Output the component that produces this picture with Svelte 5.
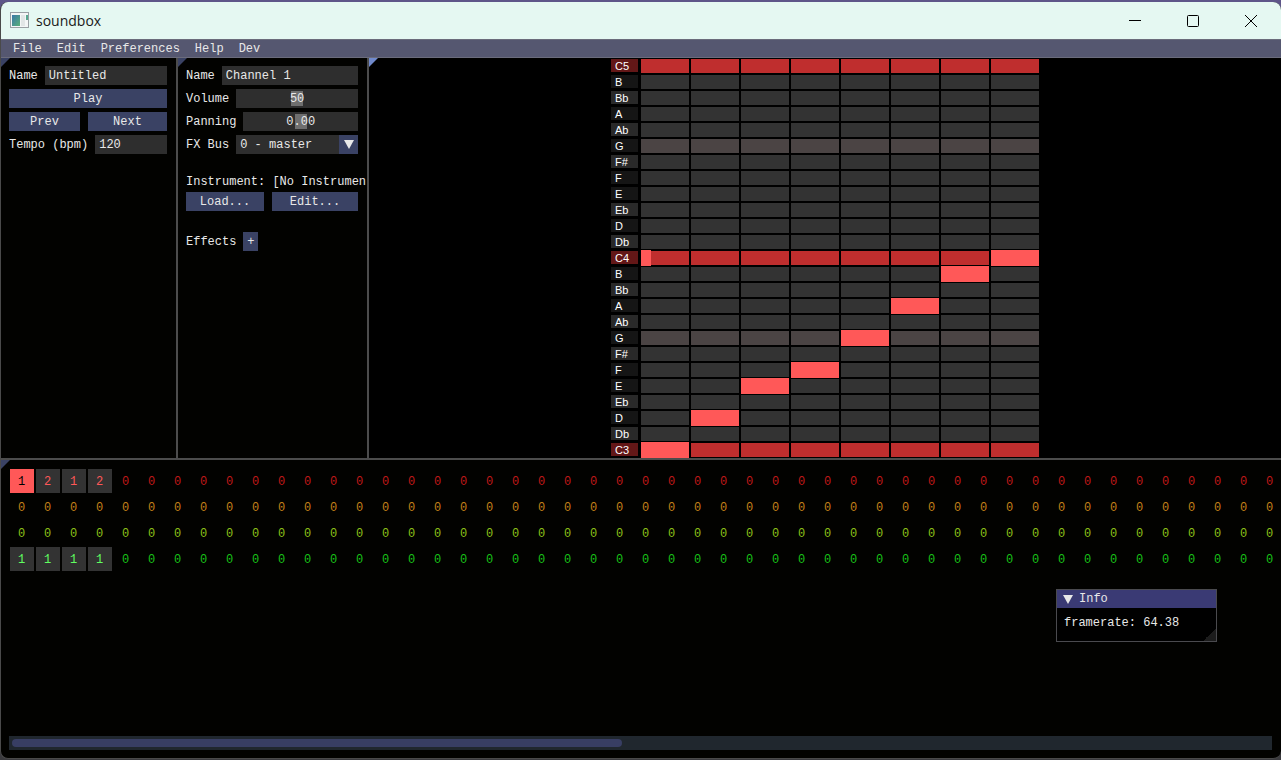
<script>
  const menus = ['File', 'Edit', 'Preferences', 'Help', 'Dev']

  const names = ['C', 'B', 'Bb', 'A', 'Ab', 'G', 'F#', 'F', 'E', 'Eb', 'D', 'Db']
  const columns = [0, 1, 2, 3, 4, 5, 6, 7]

  // row -> { column: note length in percent of a cell }
  const notes = {
    12: { 0: 21, 7: 100 },
    13: { 6: 100 },
    15: { 5: 100 },
    17: { 4: 100 },
    19: { 3: 100 },
    20: { 2: 100 },
    22: { 1: 100 },
    24: { 0: 100 }
  }

  const keys = Array.from({ length: 25 }, (_, i) => {
    const name = names[i % 12]
    return {
      label: name === 'C' ? 'C' + (5 - i / 12) : name,
      root: name === 'C',
      fifth: name === 'G',
      black: name.length > 1,
      notes: notes[i] || {}
    }
  })

  const length = 49
  const channels = [
    { color: 'red', patterns: [1, 2, 1, 2] },
    { color: 'orange', patterns: [] },
    { color: 'lime', patterns: [] },
    { color: 'green', patterns: [1, 1, 1, 1] }
  ].map(({ color, patterns }) => ({
    color,
    patterns: Array.from({ length }, (_, i) => patterns[i] || 0)
  }))

  let song = $state('Untitled')
  let tempo = $state('120')
  let channel = $state('Channel 1')
  let volume = $state(50)
  let panning = $state(0)
  let selected = $state({ row: 0, col: 0 })
</script>

<div class="window">
  <header class="titlebar">
    <svg class="logo" width="20" height="17" viewBox="0 0 20 17">
      <defs>
        <linearGradient id="screen" x1="0" y1="0" x2="1" y2="1">
          <stop offset="0" stop-color="#3c78a8" />
          <stop offset="1" stop-color="#58b078" />
        </linearGradient>
      </defs>
      <rect x="0.5" y="0.5" width="18" height="15" fill="#f4f6f6" stroke="#9aa0a4" />
      <rect x="2" y="3" width="8" height="11" fill="url(#screen)" />
      <rect x="11" y="3" width="4" height="11" fill="#e2e6e6" />
      <rect x="16" y="3" width="2" height="5" fill="#58a890" />
    </svg>
    <h1>soundbox</h1>
    <div class="controls">
      <button aria-label="Minimize">
        <svg width="12" height="12" viewBox="0 0 12 12"><path d="M0 5.5H12" /></svg>
      </button>
      <button aria-label="Maximize">
        <svg width="12" height="12" viewBox="0 0 12 12"><rect x="0.5" y="0.5" width="11" height="11" rx="1" /></svg>
      </button>
      <button aria-label="Close">
        <svg width="12" height="12" viewBox="0 0 12 12"><path d="M0 0L12 12M12 0L0 12" /></svg>
      </button>
    </div>
  </header>

  <nav class="menubar">
    {#each menus as menu}
      <button>{menu}</button>
    {/each}
  </nav>

  <main>
    <section class="panel song">
      <div class="row">
        <label for="song-name">Name</label>
        <input id="song-name" type="text" bind:value={song} />
      </div>
      <div class="row">
        <button class="btn wide">Play</button>
      </div>
      <div class="row pair">
        <button class="btn">Prev</button>
        <button class="btn">Next</button>
      </div>
      <div class="row">
        <label for="tempo">Tempo (bpm)</label>
        <input id="tempo" type="text" bind:value={tempo} />
      </div>
    </section>

    <section class="panel channel">
      <div class="row">
        <label for="channel-name">Name</label>
        <input id="channel-name" type="text" bind:value={channel} />
      </div>
      <div class="row">
        <label for="volume">Volume</label>
        <div class="slider">
          <input id="volume" type="range" min="0" max="100" bind:value={volume} />
          <output for="volume">{volume}</output>
        </div>
      </div>
      <div class="row">
        <label for="panning">Panning</label>
        <div class="slider">
          <input id="panning" type="range" min="-1" max="1" step="0.01" bind:value={panning} />
          <output for="panning">{panning.toFixed(2)}</output>
        </div>
      </div>
      <div class="row">
        <label for="fx-bus">FX Bus</label>
        <div class="combo">
          <select id="fx-bus">
            <option>0 - master</option>
          </select>
          <span class="arrow">
            <svg width="10" height="9" viewBox="0 0 10 9"><path d="M0 0H10L5 9Z" /></svg>
          </span>
        </div>
      </div>
      <p class="instrument">Instrument: [No Instrumen</p>
      <div class="row pair">
        <button class="btn">Load...</button>
        <button class="btn">Edit...</button>
      </div>
      <div class="row effects">
        <span>Effects</span>
        <button class="btn add">+</button>
      </div>
    </section>

    <section class="panel focused roll">
      <div class="keys">
        {#each keys as key}
          <div class="key" class:root={key.root} class:fifth={key.fifth} class:black={key.black}>
            <span class="label">{key.label}</span>
            {#each columns as col}
              <div class="cell">
                {#if key.notes[col]}
                  <div class="note" style="width: {key.notes[col]}%"></div>
                {/if}
              </div>
            {/each}
          </div>
        {/each}
      </div>
    </section>
  </main>

  <section class="panel sequencer">
    <div class="tracks">
      {#each channels as track, row}
        <div class="track {track.color}">
          {#each track.patterns as pattern, col}
            <button
              class:filled={pattern > 0}
              class:selected={selected.row === row && selected.col === col}
              onclick={() => (selected = { row, col })}
            >{pattern}</button>
          {/each}
        </div>
      {/each}
    </div>
    <div class="scrollbar"><div class="thumb"></div></div>
  </section>

  <aside class="info">
    <h2>
      <svg width="10" height="9" viewBox="0 0 10 9"><path d="M0 0H10L5 9Z" /></svg>
      Info
    </h2>
    <p>framerate: 64.38</p>
  </aside>
</div>

<style>
  :global(body) {
    background: linear-gradient(#5e5689 0, #5e5689 60px, #3a3a3e 80px);
  }

  .window {
    position: relative;
    box-sizing: border-box;
    display: flex;
    flex-direction: column;
    min-height: calc(100vh - 3px);
    margin: 2px 0 1px;
    border-left: 1px solid #4a4a4a;
    border-bottom: 1px solid #4a4a4a;
    border-radius: 8px;
    overflow: hidden;
    background: #020200;
    color: #e8e8e8;
    font: 12px/13px "Liberation Mono", monospace;
  }

  h1, h2, p {
    margin: 0;
    font-weight: normal;
  }

  button, input, select {
    margin: 0;
    border: 0;
    padding: 0;
    border-radius: 0;
    color: inherit;
    font: inherit;
  }

  button {
    padding-top: 2px;
    background: none;
  }

  /* title bar */
  .titlebar {
    display: flex;
    align-items: center;
    height: 37px;
    padding-left: 9px;
    background: #e5f8f2;
    color: #1a1a1a;
  }

  .titlebar h1 {
    flex: 1;
    margin-left: 6px;
    font: 14px/20px "Open Sans", sans-serif;
  }

  .controls {
    display: flex;
    align-self: stretch;
    padding-right: 1px;
  }

  .controls button {
    width: 58px;
    padding: 0;
  }

  .controls svg {
    display: block;
    margin: 0 auto;
    fill: none;
    stroke: #000;
  }

  .menubar {
    box-sizing: border-box;
    display: flex;
    gap: 15px;
    height: 19px;
    padding: 0 12px;
    border-top: 1px solid #6b6c7c;
    border-bottom: 1px solid #6b6c7c;
    background: #555770;
  }

  /* panels */
  main {
    display: flex;
    border-bottom: 2px solid #4c4c4c;
  }

  .panel {
    position: relative;
    box-sizing: border-box;
  }

  .panel::before {
    content: '';
    position: absolute;
    top: 0;
    left: 0;
    width: 9px;
    height: 9px;
    background: #3a4264;
    clip-path: polygon(0 0, 100% 0, 0 100%);
  }

  .panel.focused::before {
    background: #7089cc;
  }

  .song, .channel {
    display: flex;
    flex-direction: column;
    gap: 4px;
    border-right: 2px solid #4c4c4c;
    padding: 8px 9px 8px 8px;
  }

  .song {
    width: 177px;
  }

  .channel {
    width: 191px;
  }

  .row {
    display: flex;
    align-items: center;
    gap: 7px;
    height: 19px;
  }

  .row.pair {
    gap: 8px;
  }

  .row label,
  .effects span {
    padding-top: 2px;
  }

  .row input[type='text'],
  .slider,
  .combo {
    box-sizing: border-box;
    flex: 1;
    min-width: 0;
    height: 19px;
    background: #2e2e2e;
  }

  .row input[type='text'] {
    padding: 0 4px;
  }

  .btn {
    height: 19px;
    background: #3a4264;
  }

  .wide {
    flex: 1;
  }

  .pair .btn:first-child {
    width: 71px;
  }

  .channel .pair .btn:first-child {
    width: 78px;
  }

  .pair .btn:last-child {
    flex: 1;
  }

  .add {
    width: 15px;
  }

  .slider, .combo {
    position: relative;
  }

  .slider input {
    appearance: none;
    display: block;
    box-sizing: border-box;
    width: 100%;
    height: 19px;
    padding: 0 2px;
    background: none;
  }

  .slider input::-webkit-slider-thumb {
    appearance: none;
    width: 12px;
    height: 15px;
    background: #6f6f6f;
  }

  .slider output {
    position: absolute;
    inset: 4px 0 2px;
    text-align: center;
    pointer-events: none;
  }

  .combo select {
    appearance: none;
    display: block;
    width: 100%;
    height: 19px;
    padding: 2px 4px 0;
    background: none;
  }

  .combo option {
    background: #2e2e2e;
  }

  .arrow {
    position: absolute;
    top: 0;
    right: 0;
    display: grid;
    place-items: center;
    width: 19px;
    height: 19px;
    background: #3a4264;
    pointer-events: none;
  }

  .arrow svg, .info svg {
    fill: #e8e8e8;
  }

  .instrument {
    height: 13px;
    margin-top: 17px;
    line-height: 15px;
    white-space: nowrap;
  }

  .effects {
    margin-top: 17px;
  }

  /* piano roll */
  .roll {
    flex: 1;
    display: flex;
    justify-content: center;
    background: #000;
  }

  .key {
    display: grid;
    grid-template-columns: 28px repeat(8, 48px);
    gap: 2px;
    height: 16px;
    --cell: #333;
  }

  .key.root {
    --cell: #bf2e2e;
  }

  .key.fifth {
    --cell: #4b4444;
  }

  .label {
    height: 13px;
    margin: 1px 1px 0 0;
    padding-left: 4px;
    background: #151515;
    color: #fff;
    font: 11px/14px "Liberation Sans", sans-serif;
  }

  .black .label {
    background: #292929;
  }

  .root .label {
    background: #631717;
  }

  .cell {
    height: 14px;
    margin: 1px 0;
    background: var(--cell);
  }

  .note {
    height: 16px;
    margin: -1px 0;
    background: #ff5858;
    position: relative;
  }

  /* sequencer */
  .sequencer {
    flex: 1;
    display: flex;
    flex-direction: column;
    justify-content: space-between;
    padding: 9px 0 8px 8px;
  }

  .tracks {
    display: grid;
    gap: 2px;
    padding-left: 1px;
    overflow: hidden;
  }

  .track {
    display: flex;
    gap: 2px;
  }

  .track button {
    flex: none;
    width: 24px;
    height: 24px;
    padding-right: 1px;
    color: var(--dim);
  }

  .track .filled {
    background: #333;
    color: var(--bright);
  }

  .track .selected {
    background: var(--bright);
    color: #000;
  }

  .red {
    --dim: #c01818;
    --bright: #ff5858;
  }

  .orange {
    --dim: #c48018;
    --bright: #ffb858;
  }

  .lime {
    --dim: #8cc018;
    --bright: #c8ff58;
  }

  .green {
    --dim: #18c018;
    --bright: #60ff60;
  }

  .scrollbar {
    height: 8px;
    margin-right: 9px;
    padding: 3px;
    background: #20272e;
  }

  .thumb {
    width: 610px;
    max-width: 100%;
    height: 8px;
    border-radius: 4px;
    background: #383e63;
  }

  /* floating info window */
  .info {
    position: absolute;
    box-sizing: border-box;
    top: 587px;
    right: 64px;
    width: 161px;
    height: 53px;
    border: 1px solid #4a4a4e;
    background: linear-gradient(135deg, transparent 50%, #1c1c1c 50%) right bottom / 13px 13px no-repeat #000;
  }

  .info h2 {
    display: flex;
    align-items: center;
    gap: 6px;
    height: 18px;
    padding-left: 6px;
    background: #3a3a74;
    font: inherit;
  }

  .info p {
    padding: 9px 7px;
  }
</style>
